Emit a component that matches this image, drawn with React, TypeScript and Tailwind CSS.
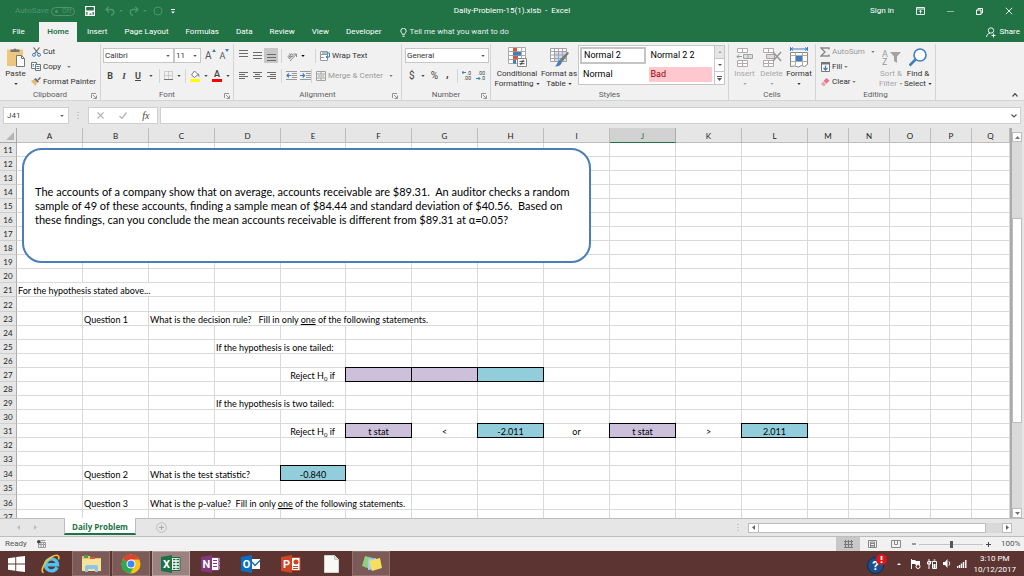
import type { ReactNode } from "react";

/* ---------- small shared pieces ---------- */

function Caret({ className = "text-[#777]" }: { className?: string }) {
  return (
    <svg viewBox="0 0 5 3" className={`h-0.5 w-1 shrink-0 ${className}`} aria-hidden="true">
      <path d="M0 0h5L2.500 3z" fill="currentColor" />
    </svg>
  );
}

function Svg({ w, h, className = "", children }: { w: number; h: number; className?: string; children: ReactNode }) {
  return (
    <svg width={w} height={h} viewBox={`0 0 ${w} ${h}`} className={`shrink-0 ${className}`} fill="none" aria-hidden="true">
      {children}
    </svg>
  );
}

function IconButton({ label, className = "", children }: { label: string; className?: string; children: ReactNode }) {
  return (
    <button type="button" aria-label={label} className={`flex shrink-0 items-center justify-center ${className}`}>
      {children}
    </button>
  );
}

function Group({ label, width, launcher, children }: { label: string; width: string; launcher?: boolean; children: ReactNode }) {
  return (
    <section aria-label={label} className={`flex shrink-0 flex-col border-r border-[#d4d4d4] ${width}`}>
      <div className="flex h-[46px]">{children}</div>
      <div className="relative flex h-2.5 items-center justify-center text-[#5f5f5f]">
        {label}
        {launcher && (
          <IconButton label={`${label} settings`} className="absolute right-[3px] top-[3px]">
            <Svg w={6} h={6}>
              <path d="M.5 5V.5H5M2 2l3 3M5.500 2.500v3h-3" stroke="#888" strokeWidth=".9" />
            </Svg>
          </IconButton>
        )}
      </div>
    </section>
  );
}

function Combo({ label, value, width }: { label: string; value: string; width: string }) {
  return (
    <div className={`relative flex h-[15px] shrink-0 items-center border border-[#c6c6c6] bg-white ${width}`}>
      <select aria-label={label} className="h-full w-full appearance-none bg-transparent pl-px text-[#333] outline-none">
        <option>{value}</option>
      </select>
      <Caret className="pointer-events-none absolute right-[3px] text-[#555]" />
    </div>
  );
}

const Rule = () => <span className="h-3.5 w-px shrink-0 bg-[#d4d4d4]" />;

function Lines({ rows, x = [0, 0, 0, 0], w = [9, 9, 9, 9] }: { rows: number[]; x?: number[]; w?: number[] }) {
  return (
    <Svg w={9} h={11}>
      {rows.map((y, i) => (
        <rect key={y} x={x[i]} y={y} width={w[i]} height="1" fill="#6b6b6b" />
      ))}
    </Svg>
  );
}

/* ---------- title bar and tabs ---------- */

function TitleBar() {
  return (
    <header className="grid h-[22px] grid-cols-[1fr_auto_1fr] items-center text-white">
      <div className="flex items-center pl-[15px] text-[#4f9470]">
        <span className="w-9">AutoSave</span>
        <button type="button" className="flex h-[9px] w-6 items-center gap-1 rounded-full border border-[#4f9470] pl-[3px] text-[7px] leading-none">
          <span className="size-[3px] rounded-full bg-[#4f9470]" />
          Off
        </button>
        <IconButton label="Save" className="ml-2.5">
          <Svg w={10} h={10}>
            <path d="M.6.6h8.800v8.800H.6z" stroke="#fff" strokeWidth="1.200" />
            <path d="M2 1h6v3.500H2z" fill="#217346" />
            <path d="M1 4.500h8V6H1zM2.500 6h5v3.500h-1V7.500h-2v2h-2z" fill="#fff" />
          </Svg>
        </IconButton>
        <IconButton label="Undo" className="ml-2.5">
          <Svg w={10} h={10}>
            <path d="M1 3.500h5a2.800 2.800 0 0 1 0 5.600M3.800.7 1 3.500l2.800 2.800" stroke="#4f9470" strokeWidth="1.300" />
          </Svg>
        </IconButton>
        <Caret className="ml-1 text-[#4f9470]" />
        <IconButton label="Redo" className="ml-1.5">
          <Svg w={10} h={10}>
            <path d="M9 3.500H4a2.800 2.800 0 0 0 0 5.600M6.200.7 9 3.500 6.200 6.300" stroke="#4f9470" strokeWidth="1.300" />
          </Svg>
        </IconButton>
        <Caret className="ml-1 text-[#4f9470]" />
        <IconButton label="Touch mode" className="ml-1.5">
          <Svg w={10} h={10}>
            <circle cx="5" cy="5" r="4" stroke="#4f9470" />
          </Svg>
        </IconButton>
        <IconButton label="Customize toolbar" className="ml-2">
          <Svg w={4} h={5}>
            <path d="M0 .5h4" stroke="#fff" />
            <path d="M0 2.500h4L2 4.500z" fill="#fff" />
          </Svg>
        </IconButton>
      </div>
      <h1>Daily-Problem-15(1).xlsb&nbsp; -&nbsp; Excel</h1>
      <div className="flex items-center justify-end gap-[22px] pr-[11px]">
        <a href="#signin">Sign in</a>
        <IconButton label="Ribbon display options">
          <Svg w={9} h={8}>
            <path d="M.5.5h8v7h-8zM.5 2h8M4.500 6.500V3.500M3 4.800l1.500-1.500L6 4.800" stroke="#fff" strokeWidth=".9" />
          </Svg>
        </IconButton>
        <IconButton label="Minimize">
          <Svg w={7} h={7}>
            <path d="M0 3.500h7" stroke="#8fb9a2" />
          </Svg>
        </IconButton>
        <IconButton label="Restore">
          <Svg w={7} h={7}>
            <path d="M.5 2h4.500v4.500H.5zM2 2V.5h4.500V5H5" stroke="#fff" />
          </Svg>
        </IconButton>
        <IconButton label="Close">
          <Svg w={8} h={8}>
            <path d="m.8.8 6.400 6.400M7.200.8.8 7.200" stroke="#fff" strokeWidth=".9" />
          </Svg>
        </IconButton>
      </div>
    </header>
  );
}

const TABS = ["Insert", "Page Layout", "Formulas", "Data", "Review", "View", "Developer"];

function RibbonTabs() {
  return (
    <nav className="flex h-5 items-stretch text-white">
      <button type="button" className="w-[39px] pr-0.5">File</button>
      <button type="button" className="w-[38px] bg-[#f1f1f1] font-semibold text-[#217346]">Home</button>
      <div className="flex gap-px pl-0.5">
        {TABS.map((t) => (
          <button key={t} type="button" className="px-2">{t}</button>
        ))}
      </div>
      <button type="button" className="flex items-center gap-[3px] pl-2.5 text-[#e4efe9]">
        <Svg w={7} h={9}>
          <path d="M2.300 6.300C2.300 5 .8 4.600.8 3a2.700 2.700 0 0 1 5.400 0c0 1.600-1.500 2-1.500 3.300zM2.300 8.200h2.400" stroke="#fff" strokeWidth=".9" />
        </Svg>
        Tell me what you want to do
      </button>
      <button type="button" className="ml-auto flex items-center gap-1 pr-1">
        <Svg w={10} h={11}>
          <circle cx="5" cy="3.500" r="2.700" stroke="#fff" strokeWidth=".9" />
          <path d="M.6 10c.2-2.300 1.500-3.600 3.400-3.800M7.500 6.500v4M5.500 8.500h4" stroke="#fff" strokeWidth=".9" />
        </Svg>
        Share
      </button>
    </nav>
  );
}

/* ---------- ribbon ---------- */

function SmallCommand({ icon, label, caret, dim, wide }: { icon: ReactNode; label: string; caret?: boolean; dim?: boolean; wide?: boolean }) {
  return (
    <button type="button" className={`flex h-[15px] items-center gap-0.5 whitespace-nowrap ${dim ? "text-[#9a9a9a]" : "text-[#333]"}`}>
      <span className="flex w-2.5 justify-center">{icon}</span>
      {label}
      {caret && <Caret className={wide ? "ml-1 text-[#777]" : "text-[#777]"} />}
    </button>
  );
}

function BigCommand({ icon, lines, width, dim, caretBelow }: { icon: ReactNode; lines: string[]; width: string; dim?: boolean; caretBelow?: boolean }) {
  const tone = dim ? "text-[#a6a6a6]" : "text-[#333]";
  return (
    <button type="button" className={`flex shrink-0 flex-col items-center whitespace-nowrap pt-px ${width} ${tone}`}>
      <span className="flex h-6 items-center">{icon}</span>
      {lines.map((l, i) => (
        <span key={l} className="flex h-2.5 items-center gap-0.5">
          {l}
          {!caretBelow && i === lines.length - 1 && <Caret className={tone} />}
        </span>
      ))}
      {caretBelow && (
        <span className="flex h-2.5 items-center">
          <Caret className={tone} />
        </span>
      )}
    </button>
  );
}

function Clipboard() {
  return (
    <Group label="Clipboard" width="w-[101px]" launcher>
      <BigCommand
        width="w-[31px]"
        caretBelow
        lines={["Paste"]}
        icon={
          <Svg w={18} h={20}>
            <path d="M0 2.500h16V19H0z" fill="#eec77f" />
            <path d="M3.500 5V2.500h3a1.600 1.600 0 0 1 3 0h3V5z" fill="#777" />
            <path d="M9.500 8.500h5l3 3v8h-8z" fill="#fff" stroke="#777" />
            <path d="M14.500 8.500v3h3" stroke="#777" />
          </Svg>
        }
      />
      <div className="flex flex-col">
        <SmallCommand
          label="Cut"
          icon={
            <Svg w={9} h={10}>
              <path d="m1.500.5 4.800 6M7.500.5l-4.800 6" stroke="#666" strokeWidth="1.200" />
              <circle cx="2" cy="7.800" r="1.500" stroke="#3f7fbf" />
              <circle cx="7" cy="7.800" r="1.500" stroke="#3f7fbf" />
            </Svg>
          }
        />
        <SmallCommand
          label="Copy"
          caret
          wide
          icon={
            <Svg w={10} h={9}>
              <path d="M.5.5h5v6h-5z" fill="#fff" stroke="#777" />
              <path d="M4.500 2.500h5v6h-5z" fill="#fff" stroke="#777" />
              <path d="M1.500 2.500H3M1.500 4H3M5.500 4.500h3M5.500 6.500h3" stroke="#3f7fbf" />
            </Svg>
          }
        />
        <SmallCommand
          label="Format Painter"
          icon={
            <Svg w={10} h={9}>
              <path d="m0 4 3-1.500 3 3L4.500 9z" fill="#eab96b" />
              <path d="m3 2.300 1.600-1.200 3.400 3.300-1.300 1.400zM6.500 2.300 9 0l1 1-2.300 2.500z" fill="#6d6d6d" />
            </Svg>
          }
        />
      </div>
    </Group>
  );
}

function FontGroup() {
  return (
    <Group label="Font" width="w-[133px]" launcher>
      <div className="flex w-full flex-col gap-[5px] pl-0.5 pt-1">
        <div className="flex items-center">
          <Combo label="Font family" value="Calibri" width="w-[71px]" />
          <Combo label="Font size" value="11" width="w-[27px]" />
          <IconButton label="Increase font size" className="ml-1 items-start text-[10px] leading-[13px] text-[#555]">
            A<Svg w={4} h={3}><path d="M2 0 4 3H0z" fill="#3f7fbf" /></Svg>
          </IconButton>
          <IconButton label="Decrease font size" className="ml-1 items-start text-[9px] leading-[14px] text-[#555]">
            A<Svg w={4} h={3}><path d="M2 3 4 0H0z" fill="#3f7fbf" /></Svg>
          </IconButton>
        </div>
        <div className="flex h-[15px] items-center text-[9px] text-[#444]">
          <button type="button" className="w-3.5 font-bold">B</button>
          <button type="button" className="w-3.5 font-['Liberation_Serif',serif] font-bold italic">I</button>
          <button type="button" className="w-3.5 font-semibold underline">U</button>
          <Caret className="ml-1" />
          <span className="ml-1.5 flex"><Rule /></span>
          <IconButton label="Borders" className="ml-1">
            <Svg w={9} h={9}>
              <path d="M.5.5h8v8h-8zM4.500.5v8M.5 4.500h8" stroke="#aaa" strokeDasharray="1 1" />
              <path d="M0 8.500h9" stroke="#777" />
            </Svg>
          </IconButton>
          <Caret className="ml-1" />
          <span className="ml-1 flex"><Rule /></span>
          <IconButton label="Fill color" className="ml-1">
            <Svg w={10} h={12}>
              <path d="m4.500 1 3.500 3.500-3.500 3L1.500 5z" fill="#fff" stroke="#777" />
              <path d="M8 3.500c1.200.5 1.600 1.800 1.200 4C8.600 6.500 8 6 8 3.500z" fill="#3f7fbf" />
              <path d="M0 9h10v3H0z" fill="#ff0" />
            </Svg>
          </IconButton>
          <Caret className="ml-1" />
          <IconButton label="Font color" className="ml-1 w-2.5 flex-col">
            <span className="text-[9px] font-semibold leading-[9px]">A</span>
            <span className="h-[3px] w-2.5 bg-[#f00]" />
          </IconButton>
          <Caret className="ml-1" />
        </div>
      </div>
    </Group>
  );
}

function Indent({ out }: { out?: boolean }) {
  return (
    <Svg w={11} h={9}>
      <path d="M0 .5h11M6 2.500h5M6 4.500h5M6 6.500h5M0 8.500h11" stroke="#999" />
      <path d={out ? "M5.500 4.500H1M2.800 2.500 1 4.500l1.800 2" : "M0 4.500h4.500M2.700 2.500l1.800 2-1.800 2"} stroke="#3f7fbf" strokeWidth="1.200" />
    </Svg>
  );
}

function Alignment() {
  return (
    <Group label="Alignment" width="w-[168px]" launcher>
      <div className="flex w-full flex-col gap-[5px] pl-0.5 pt-1">
        <div className="flex h-[15px] items-center">
          <IconButton label="Top align" className="h-[15px] w-3.5"><Lines rows={[0, 3, 6]} /></IconButton>
          <IconButton label="Middle align" className="h-[15px] w-3.5"><Lines rows={[2, 5, 8]} /></IconButton>
          <IconButton label="Bottom align" className="h-[15px] w-3.5 bg-[#c8c8c8]"><Lines rows={[4, 7, 10]} /></IconButton>
          <span className="ml-[3px] flex"><Rule /></span>
          <IconButton label="Orientation" className="ml-1">
            <Svg w={12} h={12}>
              <path d="M4 11 10.500 4M10.500 7V4h-3" stroke="#888" />
              <text x="1" y="8" fontSize="6" fill="#555" transform="rotate(-35 4 6)">ab</text>
            </Svg>
          </IconButton>
          <Caret className="ml-[3px]" />
          <span className="ml-2.5 mr-1 flex"><Rule /></span>
          <SmallCommand
            label="Wrap Text"
            icon={
              <Svg w={10} h={10}>
                <path d="M.5.5h7v9h-7z" fill="#fff" stroke="#999" />
                <path d="M0 3.500h8M0 6.500h4" stroke="#999" />
                <path d="M2 2h7.500v4H6M7.500 4.500 6 6l1.500 1.500" stroke="#3f7fbf" />
              </Svg>
            }
          />
        </div>
        <div className="flex h-[15px] items-center">
          <IconButton label="Align left" className="h-[15px] w-3.5"><Lines rows={[2, 4, 6, 8]} w={[9, 6, 9, 6]} /></IconButton>
          <IconButton label="Center" className="h-[15px] w-3.5"><Lines rows={[2, 4, 6, 8]} x={[0, 2, 0, 2]} w={[9, 5, 9, 5]} /></IconButton>
          <IconButton label="Align right" className="h-[15px] w-3.5"><Lines rows={[2, 4, 6, 8]} x={[0, 3, 0, 3]} w={[9, 6, 9, 6]} /></IconButton>
          <span className="ml-[3px] flex"><Rule /></span>
          <IconButton label="Decrease indent" className="ml-1"><Indent out /></IconButton>
          <IconButton label="Increase indent" className="ml-[3px]"><Indent /></IconButton>
          <span className="mr-1 flex"><Rule /></span>
          <SmallCommand
            label="Merge & Center"
            dim
            caret
            wide
            icon={
              <Svg w={10} h={10}>
                <path d="M.5.5h9v9h-9zM.5 3h9M.5 7h9M5 .5V3M5 7v2.500M2 5h6" stroke="#a3a3a3" />
              </Svg>
            }
          />
        </div>
      </div>
    </Group>
  );
}

function DecimalIcon({ less }: { less?: boolean }) {
  return (
    <Svg w={11} h={13}>
      <text x={less ? "2" : "5"} y="6" fontSize="5" fill="#333">{less ? ".00" : ".0"}</text>
      <text x={less ? "5" : "2"} y="11" fontSize="5" fill="#333">{less ? ".0" : ".00"}</text>
      <path d={less ? "M0 9.500h4M2.500 8 4 9.500 2.500 11" : "M4 3.500H0M1.500 2 0 3.500 1.500 5"} stroke="#3f7fbf" />
    </Svg>
  );
}

function NumberGroup() {
  return (
    <Group label="Number" width="w-[89px]" launcher>
      <div className="flex w-full flex-col gap-[5px] pl-[3px] pt-1">
        <Combo label="Number format" value="General" width="w-[84px]" />
        <div className="flex h-[15px] items-center text-[#444]">
          <button type="button" className="ml-1 text-[10px]">$</button>
          <Caret className="ml-1.5" />
          <button type="button" className="ml-1.5 text-[10px]">%</button>
          <button type="button" className="ml-2 pb-1 text-[11px] font-bold">,</button>
          <span className="ml-2 mr-1 flex"><Rule /></span>
          <IconButton label="Increase decimal"><DecimalIcon /></IconButton>
          <IconButton label="Decrease decimal" className="ml-[3px]"><DecimalIcon less /></IconButton>
        </div>
      </div>
    </Group>
  );
}

function Styles() {
  return (
    <Group label="Styles" width="w-[238px]">
      <BigCommand
        width="w-[52px]"
        lines={["Conditional", "Formatting"]}
        icon={
          <Svg w={19} h={20}>
            <path d="M.5.5h17v16H.5zM.5 4.500h17M.5 8.500h17M.5 12.500h17M5.500.5v16M13.500.5v16" fill="#fff" stroke="#aaa" />
            <path d="M5 1h4v3.500H5zM5 9h5v3.500H5z" fill="#d9573a" />
            <path d="M5 5h8v3.500H5zM5 13h3v3.500H5z" fill="#3f7fbf" />
            <path d="M9.500 11.500h9v8h-9z" fill="#fff" stroke="#888" />
            <path d="M11.500 14.300h5M11.500 16.700h5M15.500 12.800l-3 5.400" stroke="#444" />
          </Svg>
        }
      />
      <BigCommand
        width="w-[32px]"
        lines={["Format as", "Table"]}
        icon={
          <Svg w={19} h={20}>
            <path d="M.5 1.500h16v13H.5z" fill="#fff" />
            <path d="M5 5h11v9H5z" fill="#c9dcf0" />
            <path d="M.5 1.500h16v13H.5zM.5 4.500h16M.5 8h16M.5 11.500h16M4.500 1.500v13M8.500 1.500v13M12.500 1.500v13" stroke="#a3a3a3" />
            <path d="m17.500 5 1.500 1-7 9-2.500-2z" fill="#777" />
            <path d="m9.500 13 2.500 2c-.8 3-3 4.500-7 4.500C7 18 7.500 14.500 9.500 13z" fill="#3f7fbf" />
          </Svg>
        }
      />
      <div className="ml-[3px] mt-px flex h-10 w-[147px] border border-[#c6c6c6] bg-white text-[9px] text-black">
        <div className="grid flex-1 grid-cols-2 grid-rows-2 text-left">
          <button type="button" className="m-px border-2 border-[#c4c4c4] pl-0.5 text-left leading-none">Normal 2</button>
          <button type="button" className="m-0.5 pl-0.5 text-left leading-none">Normal 2 2</button>
          <button type="button" className="m-0.5 pl-0.5 text-left leading-none">Normal</button>
          <button type="button" className="m-0.5 bg-[#ffc7ce] pl-0.5 text-left leading-none text-[#9c0006]">Bad</button>
        </div>
        <div className="flex w-2.5 flex-col divide-y divide-[#c6c6c6] border-l border-[#c6c6c6]">
          <IconButton label="Previous styles" className="flex-1 bg-[#e6e6e6]">
            <Svg w={4} h={2}><path d="M0 2h4L2 0z" fill="#aaa" /></Svg>
          </IconButton>
          <IconButton label="Next styles" className="flex-1"><Svg w={4} h={2}><path d="M0 0h4L2 2z" fill="#555" /></Svg></IconButton>
          <IconButton label="More styles" className="flex-1">
            <Svg w={5} h={5}><path d="M0 .5h5" stroke="#555" /><path d="M0 2h5L2.500 5z" fill="#555" /></Svg>
          </IconButton>
        </div>
      </div>
    </Group>
  );
}

function Cells() {
  return (
    <Group label="Cells" width="w-[87px]">
      <span className="w-0.5" />
      <BigCommand
        width="w-[27px]"
        dim
        caretBelow
        lines={["Insert"]}
        icon={
          <Svg w={18} h={19}>
            <path d="M1.500.5h10v4h-10zM6.500.5v4M1.500 12.500h10v6h-10zM6.500 12.500v6M1.500 15.500h10" fill="#fff" stroke="#b3a9ae" />
            <path d="M7.500 6.500h9v4h-9zM12 6.500v4" fill="#ddd" stroke="#a3a3a3" />
            <path d="M6 8.500H1M3 6.500l-2 2 2 2" stroke="#999" />
          </Svg>
        }
      />
      <BigCommand
        width="w-[27px]"
        dim
        caretBelow
        lines={["Delete"]}
        icon={
          <Svg w={20} h={19}>
            <path d="M1.500.5h10v4h-10zM6.500.5v4M1.500 12.500h10v6h-10zM6.500 12.500v6M1.500 15.500h10" fill="#fff" stroke="#b3a9ae" />
            <path d="M4.500 6.500h8v4h-8z" fill="#ddd" stroke="#a3a3a3" />
            <path d="m11 4 8 9M19 4l-8 9" stroke="#999" strokeWidth="1.600" />
          </Svg>
        }
      />
      <BigCommand
        width="w-[28px]"
        caretBelow
        lines={["Format"]}
        icon={
          <Svg w={19} h={21}>
            <path d="M1 2h16M3 .5 1 2l2 1.500M15 .5 17 2l-2 1.500M.5 0v4M17.500 0v4" stroke="#3f7fbf" />
            <path d="M.5 5.500h17v12l-3 2-3-1-3 1.500-4-1-4 .5z" fill="#fff" stroke="#888" />
            <path d="M.5 8.500h17M.5 14.500h17M5.500 5.500v13M12.500 5.500v13" stroke="#aaa" />
            <path d="M6 9h6v5H6z" fill="#3f7fbf" />
          </Svg>
        }
      />
    </Group>
  );
}

function Editing() {
  return (
    <Group label="Editing" width="w-[120px]">
      <div className="flex w-[62px] flex-col pl-1">
        <SmallCommand
          label="AutoSum"
          dim
          caret
          wide
          icon={<Svg w={10} h={10}><path d="M9 2.500V1H1l4 4-4 4h8V7.500" stroke="#8a8a8a" strokeWidth="1.400" /></Svg>}
        />
        <SmallCommand
          label="Fill"
          caret
          icon={
            <Svg w={9} h={10}>
              <path d="M.5.5h8v9h-8z" fill="#fff" stroke="#777" />
              <path d="M0 0h9v2.500H0z" fill="#777" />
              <path d="M4.500 3.500v4.500M2.500 6l2 2 2-2" stroke="#3f7fbf" strokeWidth="1.300" />
            </Svg>
          }
        />
        <SmallCommand
          label="Clear"
          caret
          icon={
            <Svg w={9} h={8}>
              <path d="m5.500 0 3 2.500-3 3.300-3-2.700z" fill="#e8728a" />
              <path d="m2 3.600 3 2.700L3.500 8H2L0 6z" fill="#f0a0b0" />
            </Svg>
          }
        />
      </div>
      <BigCommand
        width="w-[26px]"
        dim
        lines={["Sort &", "Filter"]}
        icon={
          <Svg w={19} h={21}>
            <text x="0" y="10" fontSize="9" fill="#999">A</text>
            <text x="0" y="18" fontSize="9" fill="#999">Z</text>
            <path d="M8 5h11l-4 4.500V16l-3-2V9.500z" fill="#a3a3a3" />
          </Svg>
        }
      />
      <BigCommand
        width="w-[28px]"
        lines={["Find &", "Select"]}
        icon={
          <Svg w={18} h={19}>
            <circle cx="11" cy="7" r="6" fill="#fff" stroke="#3f7fbf" strokeWidth="1.600" />
            <path d="m6.500 11.500-6 6" stroke="#3f7fbf" strokeWidth="2.600" />
          </Svg>
        }
      />
    </Group>
  );
}

function Ribbon() {
  return (
    <div className="flex h-[59px] border-b border-[#d4d4d4] bg-[#f1f1f1] pt-0.5">
      <Clipboard />
      <FontGroup />
      <Alignment />
      <NumberGroup />
      <Styles />
      <Cells />
      <Editing />
      <IconButton label="Collapse ribbon" className="ml-auto mr-1.5 self-end pb-[3px]">
        <Svg w={6} h={4}><path d="m.5 3.500 2.500-3 2.500 3" stroke="#555" strokeWidth="1.200" /></Svg>
      </IconButton>
    </div>
  );
}

function FormulaBar() {
  return (
    <div className="flex h-[27px] items-center bg-[#e6e6e6] px-[3px] pt-0.5 text-[#444]">
      <div className="relative flex h-[17px] w-[66px] items-center border border-[#cfcfcf] bg-white">
        <input aria-label="Name box" defaultValue="J41" className="w-full bg-transparent pl-[3px] text-[8px] outline-none" />
        <Caret className="pointer-events-none absolute right-1 text-[#555]" />
      </div>
      <Svg w={2} h={8} className="mx-2">
        <path d="M1 0v8" stroke="#aaa" strokeDasharray="1 2" />
      </Svg>
      <div className="ml-px flex h-[17px] w-[70px] items-center justify-around border border-[#cfcfcf] bg-white">
        <IconButton label="Cancel"><Svg w={7} h={7}><path d="m.5.5 6 6M6.500.5l-6 6" stroke="#b5b5b5" strokeWidth="1.200" /></Svg></IconButton>
        <IconButton label="Enter"><Svg w={8} h={7}><path d="m.5 4 2.500 2.500L7.500.5" stroke="#b5b5b5" strokeWidth="1.300" /></Svg></IconButton>
        <button type="button" className="font-['Liberation_Serif',serif] text-[10px] italic">fx</button>
      </div>
      <div className="ml-0.5 flex h-[17px] flex-1 items-center border border-[#cfcfcf] bg-white pr-[3px]">
        <input aria-label="Formula" className="min-w-0 flex-1 bg-transparent px-1 outline-none" />
        <Svg w={6} h={4}><path d="m.5.5 2.500 2.500L5.500.5" stroke="#555" strokeWidth="1.200" /></Svg>
      </div>
    </div>
  );
}

/* ---------- worksheet ---------- */

const COLUMNS = "ABCDEFGHIJKLMNOPQ".split("");
const ROWS = Array.from({ length: 27 }, (_, i) => i + 11);
const TALL_ROWS = [22, 34, 36];

function columnWidth(index: number) {
  if (index === 4) return "w-[65px]";
  if (index < 12) return "w-[66px]";
  return index < 16 ? "w-[41px]" : "";
}

type Cell = { text?: ReactNode; span?: number; align?: "center" | "right"; fill?: "purple" | "teal" };

const reject: Cell = { text: <>Reject H<sub className="bottom-[-2px] text-[6px]">0</sub> if</>, align: "right" };

const CELLS: Record<string, Cell> = {
  A21: { text: "For the hypothesis stated above...", span: 3 },
  B23: { text: "Question 1" },
  C23: { text: <>What is the decision rule?&nbsp;&nbsp; Fill in only <u>one</u> of the following statements.</>, span: 5 },
  D25: { text: "If the hypothesis is one tailed:", span: 2 },
  E27: reject,
  F27: { fill: "purple" },
  G27: { fill: "purple" },
  H27: { fill: "teal" },
  D29: { text: "If the hypothesis is two tailed:", span: 2 },
  E31: reject,
  F31: { text: "t stat", fill: "purple" },
  G31: { text: "<", align: "center" },
  H31: { text: "-2.011", fill: "teal" },
  I31: { text: "or", align: "center" },
  J31: { text: "t stat", fill: "purple" },
  K31: { text: ">", align: "center" },
  L31: { text: "2.011", fill: "teal" },
  B34: { text: "Question 2" },
  C34: { text: "What is the test statistic?", span: 2 },
  E34: { text: "-0.840", fill: "teal" },
  B36: { text: "Question 3" },
  C36: { text: <>What is the p-value?&nbsp; Fill in only <u>one</u> of the following statements.</>, span: 4 },
};

const BOXED = "text-center border-black shadow-[-1px_0_0_#000,0_-1px_0_#000,-1px_-1px_0_#000]";

function cellClass(cell?: Cell) {
  if (cell?.fill === "purple") return `${BOXED} bg-[#ccc0da]`;
  if (cell?.fill === "teal") return `${BOXED} bg-[#92cddc]`;
  if (cell?.align === "center") return "border-[#d9d9d9] text-center";
  if (cell?.align === "right") return "border-[#d9d9d9] pr-2.5 text-right";
  return "border-[#d9d9d9] pl-px";
}

function Row({ row }: { row: number }) {
  const cells: ReactNode[] = [];
  for (let i = 0; i < COLUMNS.length; ) {
    const id = `${COLUMNS[i]}${row}`;
    const cell = CELLS[id];
    const span = cell?.span ?? 1;
    cells.push(
      <td key={id} colSpan={span} className={`whitespace-nowrap border-b border-r p-0 align-bottom ${cellClass(cell)}`}>
        {cell?.text}
      </td>,
    );
    i += span;
  }
  return (
    <tr className={TALL_ROWS.includes(row) ? "h-[15px]" : "h-[14px]"}>
      <th
        scope="row"
        className="border-b border-r border-b-[#cfcfcf] border-r-[#ababab] bg-[#e6e6e6] p-0 align-bottom text-[8px] font-normal text-[#222]"
      >
        {row}
      </th>
      {cells}
    </tr>
  );
}

function Sheet() {
  return (
    <div className="flex min-h-0 flex-1 bg-[#e6e6e6]">
      <main className="relative min-w-0 flex-1 overflow-hidden border-r-2 border-[#ababab] bg-white font-['Lato','Liberation_Sans',sans-serif] text-[9px] leading-[11px] text-black">
        <table className="w-full table-fixed border-separate border-spacing-0">
          <colgroup>
            <col className="w-[17px]" />
            {COLUMNS.map((c, i) => (
              <col key={c} className={columnWidth(i)} />
            ))}
          </colgroup>
          <thead>
            <tr className="h-[15px] bg-[#e6e6e6] align-bottom text-[8px] text-[#222]">
              <td className="border-b border-r border-[#ababab] p-0">
                <Svg w={8} h={8} className="mb-0.5 ml-auto mr-0.5"><path d="M8 0v8H0z" fill="#b5b5b5" /></Svg>
              </td>
              {COLUMNS.map((c) => (
                <th
                  key={c}
                  scope="col"
                  className={
                    c === "J"
                      ? "border-b border-r border-b-[#217346] border-r-[#ababab] bg-[#d2d2d2] p-0 font-normal text-[#217346]"
                      : "border-b border-r border-[#bdbdbd] p-0 font-normal"
                  }
                >
                  {c}
                </th>
              ))}
            </tr>
          </thead>
          <tbody>
            {ROWS.map((r) => (
              <Row key={r} row={r} />
            ))}
          </tbody>
        </table>
        <div className="absolute left-[22px] top-5 flex h-[115px] w-[569px] items-center rounded-[20px] border-2 border-[#4a7ebb] bg-white px-[11px]">
          <p className="whitespace-nowrap text-[11px] leading-[14px]">
            The accounts of a company show that on average, accounts receivable are $89.31.&nbsp; An auditor checks a random
            <br />
            sample of 49 of these accounts, finding a sample mean of $84.44 and standard deviation of $40.56.&nbsp; Based on
            <br />
            these findings, can you conclude the mean accounts receivable is different from $89.31 at α=0.05?
          </p>
        </div>
      </main>
      <div className="flex w-3 flex-col pr-0.5 pt-1">
        <IconButton label="Scroll up" className="h-2.5 border border-[#bdbdbd] bg-white">
          <Svg w={5} h={3}><path d="M0 3h5L2.500 0z" fill="#777" /></Svg>
        </IconButton>
        <div className="flex flex-1 flex-col bg-[#d9d9d9]">
          <span className="grow-[77]" />
          <span className="grow-[204] border border-[#bdbdbd] bg-white" />
          <span className="grow-[86]" />
        </div>
        <IconButton label="Scroll down" className="h-2.5 border border-[#bdbdbd] bg-white">
          <Svg w={5} h={3}><path d="M0 0h5L2.500 3z" fill="#777" /></Svg>
        </IconButton>
      </div>
    </div>
  );
}

function SheetTabs() {
  return (
    <div className="flex h-[19px] items-stretch border-b border-t border-[#bdbdbd] bg-[#e6e6e6]">
      <div className="flex w-16 items-center gap-3.5 pl-[17px]">
        <IconButton label="Previous sheet"><Svg w={3} h={5}><path d="M3 0v5L0 2.500z" fill="#bbb" /></Svg></IconButton>
        <IconButton label="Next sheet"><Svg w={3} h={5}><path d="M0 0v5l3-2.500z" fill="#bbb" /></Svg></IconButton>
      </div>
      <button
        type="button"
        className="-mt-px mb-px w-[72px] border-x border-b-2 border-x-[#bdbdbd] border-b-[#217346] bg-white pt-0.5 font-['Open_Sans',sans-serif] font-bold text-[#217346]"
      >
        Daily Problem
      </button>
      <IconButton label="New sheet" className="ml-5">
        <Svg w={11} h={11}>
          <circle cx="5.500" cy="5.500" r="4.800" stroke="#bdbdbd" />
          <path d="M5.500 3v5M3 5.500h5" stroke="#aaa" />
        </Svg>
      </IconButton>
      <div className="ml-auto flex items-center">
        <Svg w={2} h={8} className="mr-[9px]"><path d="M1 0v8" stroke="#aaa" strokeDasharray="1 2" /></Svg>
        <IconButton label="Scroll left" className="h-2.5 w-[11px] border border-[#bdbdbd] bg-white">
          <Svg w={3} h={5}><path d="M3 0v5L0 2.500z" fill="#666" /></Svg>
        </IconButton>
        <div className="h-2.5 w-[227px] border border-l-0 border-[#bdbdbd] bg-white" />
        <div className="h-2.5 w-4 bg-[#d9d9d9]" />
        <IconButton label="Scroll right" className="mr-3 h-2.5 w-2.5 border border-[#bdbdbd] bg-white">
          <Svg w={3} h={5}><path d="M0 0v5l3-2.500z" fill="#666" /></Svg>
        </IconButton>
      </div>
    </div>
  );
}

function StatusBar() {
  return (
    <div className="flex h-3.5 items-center bg-[#f1f1f1] pl-[5px] pr-1 text-[#555]">
      <span className="w-8">Ready</span>
      <IconButton label="Record macro">
        <Svg w={9} h={8}>
          <path d="M1.500 2.500h7v5h-7zM1.500 4.500h7M4 2.500v5M6.500 2.500v5M3.500.5h5" stroke="#999" />
          <circle cx="1.800" cy="1.800" r="1.800" fill="#444" />
        </Svg>
      </IconButton>
      <div className="ml-auto flex h-full items-center">
        <IconButton label="Normal view" className="h-full w-6 bg-[#c8c8c8]">
          <Svg w={9} h={8}><path d="M1.500 0v8M4.500 0v8M7.500 0v8M0 1.500h9M0 4.500h9M0 7.500h9" stroke="#777" /></Svg>
        </IconButton>
        <IconButton label="Page layout view" className="h-full w-6">
          <Svg w={9} h={8}><path d="M.5.5h8v7h-8zM2.500 2h4v5h-4zM3 3.500h3M3 5.500h3" stroke="#888" /></Svg>
        </IconButton>
        <IconButton label="Page break view" className="h-full w-6">
          <Svg w={10} h={8}><path d="M.5.5h9v7h-9zM3.500.5v4h3v-4" stroke="#888" /></Svg>
        </IconButton>
        <IconButton label="Zoom out" className="ml-1 w-1"><Svg w={4} h={4}><path d="M0 2h4" stroke="#444" /></Svg></IconButton>
        <input
          type="range"
          aria-label="Zoom"
          defaultValue={50}
          className="mx-[3px] h-2 w-16 appearance-none bg-[linear-gradient(#c4c4c4,#c4c4c4)] bg-[length:100%_1px] bg-center bg-no-repeat [&::-webkit-slider-thumb]:h-[7px] [&::-webkit-slider-thumb]:w-[3px] [&::-webkit-slider-thumb]:appearance-none [&::-webkit-slider-thumb]:bg-[#555]"
        />
        <IconButton label="Zoom in"><Svg w={5} h={5}><path d="M0 2.500h5M2.500 0v5" stroke="#444" /></Svg></IconButton>
        <span className="ml-2.5 w-[19px] text-right">100%</span>
      </div>
    </div>
  );
}

/* ---------- taskbar ---------- */

function OfficeIcon({ letter, color, children }: { letter: string; color: string; children: ReactNode }) {
  return (
    <Svg w={20} h={20}>
      {children}
      <path d="M0 3 11 1v18L0 17z" fill={color} />
      <text x="5.500" y="14" textAnchor="middle" fontSize="11" fontWeight="700" fill="#fff">{letter}</text>
    </Svg>
  );
}

function TaskButton({ label, state = "idle", children }: { label: string; state?: "idle" | "open" | "active"; children: ReactNode }) {
  const look = {
    idle: "border-transparent",
    open: "border-[#93716e] bg-[#7b5a57]",
    active: "border-[#b9a3a1] bg-[#9b8280]",
  }[state];
  return (
    <IconButton label={label} className={`h-full w-[38px] border ${look}`}>
      {children}
    </IconButton>
  );
}

function Taskbar() {
  return (
    <footer className="flex h-[25px] items-stretch bg-[#5c3431] text-white">
      <IconButton label="Start" className="w-8">
        <Svg w={17} h={16}>
          <path d="M0 2.300 7.300 1.200v6.300H0zM8.200 1 17 0v7.500H8.200zM0 8.400h7.300v6.400L0 13.800zM8.200 8.400H17V16l-8.800-1z" fill="#fff" />
        </Svg>
      </IconButton>
      <div className="flex gap-0.5">
        <TaskButton label="Internet Explorer">
          <Svg w={20} h={20}>
            <path d="M16 13.300A6 6 0 1 1 16.500 10.800H6" stroke="#4fc1f0" strokeWidth="3.400" />
            <path d="M2.500 18.800C-1 17 3.500 7 11 2.800c4.500-2.500 8-2 6.500 2.700" stroke="#f5c230" strokeWidth="1.600" />
          </Svg>
        </TaskButton>
        <TaskButton label="File Explorer" state="open">
          <Svg w={22} h={19}>
            <path d="M2 2h8l1 2h10v13H2z" fill="#e9c766" />
            <path d="M4 1h4v3H4z" fill="#4a9b4a" />
            <path d="M10 3h5v2h-5z" fill="#d9573a" />
            <path d="M2 5h19v12H2z" fill="#f7e29a" />
            <path d="M5 18v-5q0-2 2-2h9q2 0 2 2v5h-3v-3H8v3z" fill="#8dc4e8" />
          </Svg>
        </TaskButton>
        <TaskButton label="Chrome" state="open">
          <Svg w={20} h={20}>
            <circle cx="10" cy="10" r="9.500" fill="#fbc116" />
            <path d="M10 10 1.800 5.200A9.500 9.500 0 0 1 18.300 5.500H10z" fill="#e0412f" />
            <path d="M1.800 5.200A9.500 9.500 0 0 0 9.200 19.500l4-7.300L10 10z" fill="#2da94f" />
            <circle cx="10" cy="10" r="4.500" fill="#fff" />
            <circle cx="10" cy="10" r="3.500" fill="#4285f4" />
          </Svg>
        </TaskButton>
        <TaskButton label="Excel" state="active">
          <OfficeIcon letter="X" color="#1d7044">
            <path d="M9 3.500h10v13H9z" fill="#fff" stroke="#1d7044" />
            <path d="M12 5.500h2.500M12 8.500h2.500M12 11.500h2.500M12 14.500h2.500M15.500 5.500H18M15.500 8.500H18M15.500 11.500H18M15.500 14.500H18" stroke="#1d7044" strokeWidth="1.500" />
          </OfficeIcon>
        </TaskButton>
        <TaskButton label="OneNote">
          <OfficeIcon letter="N" color="#80397b">
            <path d="M9 3.500h9v13H9z" fill="#fff" stroke="#80397b" />
            <path d="M12 6.500h4M12 9.500h4M12 12.500h4" stroke="#80397b" />
            <path d="M17 4h2v3h-2zM17 8h2v3h-2zM17 12h2v3h-2z" fill="#b97fb5" />
          </OfficeIcon>
        </TaskButton>
        <TaskButton label="Outlook">
          <OfficeIcon letter="O" color="#0a6fc2">
            <path d="M9 5h10v10H9z" fill="#fff" />
            <path d="m11 8 3 3.500 5-5" stroke="#0a6fc2" strokeWidth="1.300" />
          </OfficeIcon>
        </TaskButton>
        <TaskButton label="PowerPoint">
          <OfficeIcon letter="P" color="#d04525">
            <path d="M9 3.500h10v13H9z" fill="#fff" stroke="#d04525" />
            <circle cx="15" cy="8" r="2.500" fill="#d04525" />
            <path d="M12 12.500h5M12 14.500h5" stroke="#d04525" />
          </OfficeIcon>
        </TaskButton>
        <TaskButton label="Document">
          <Svg w={15} h={18}>
            <path d="M.5.5h10l4 4v13H.5z" fill="#f8f8f5" stroke="#d5d5cf" />
            <path d="M10.500.5v4h4" fill="#ddd" stroke="#c5c5bf" />
          </Svg>
        </TaskButton>
        <TaskButton label="Sticky Notes" state="open">
          <Svg w={21} h={17}>
            <path d="m4 1 8 2-3 11-8-3z" fill="#8fcf7f" />
            <path d="m7 4 8-1 1 11-9 1z" fill="#a6cdf0" />
            <path d="m8 6 11-3 2 10-10 3z" fill="#f7df5e" />
          </Svg>
        </TaskButton>
      </div>
      <div className="ml-auto flex items-center pr-2">
        <IconButton label="Support alert" className="mr-2.5">
          <Svg w={20} h={20}>
            <circle cx="8.500" cy="11.500" r="8" fill="#1c4f8c" stroke="#0c2c55" />
            <text x="8.500" y="16" textAnchor="middle" fontSize="13" fontWeight="700" fill="#fff">?</text>
            <circle cx="14.500" cy="5.500" r="5.500" fill="#d8161b" />
            <path d="M14.500 2v4M14.500 7.200v1.800" stroke="#fff" strokeWidth="1.800" />
          </Svg>
        </IconButton>
        <div className="flex items-center gap-1.5">
          <IconButton label="Show hidden icons" className="mr-1"><Svg w={4} h={2}><path d="M0 2h4L2 0z" fill="#fff" /></Svg></IconButton>
          <IconButton label="Action center">
            <Svg w={10} h={10}>
              <path d="M.5 0v10" stroke="#fff" />
              <path d="M1 1h3l1 1h4v4H5L4 5H1z" fill="#fff" />
              <circle cx="7" cy="7.500" r="2" fill="#5c3431" stroke="#fff" />
            </Svg>
          </IconButton>
          <IconButton label="Battery">
            <Svg w={10} h={10}>
              <path d="M5.500 2.500h4v7h-4zM6.500 1h2M.5 2.500h4M2 0v5M2 5v5M.5 3v2h3V3" stroke="#fff" />
              <path d="M6.500 5h2v4h-2z" fill="#fff" />
            </Svg>
          </IconButton>
          <IconButton label="Volume">
            <Svg w={8} h={9}>
              <path d="M0 3h2l2.500-3v9L2 6H0z" fill="#fff" />
              <path d="M6 2.500q1.200 2 0 4" stroke="#fff" />
            </Svg>
          </IconButton>
          <IconButton label="Network">
            <Svg w={10} h={8}>
              <path d="M.5 6v2M2.500 5v3M4.500 3.500V8M6.500 2v6M8.800 0v8" stroke="#fff" strokeWidth="1.400" />
            </Svg>
          </IconButton>
        </div>
        <div className="ml-1.5 text-center leading-[11px]">
          <div>3:10 PM</div>
          <div>10/12/2017</div>
        </div>
      </div>
    </footer>
  );
}

export default function App() {
  return (
    <div className="flex h-screen flex-col overflow-hidden bg-[#e6e6e6] font-['Roboto','Noto_Sans',sans-serif] text-[8px] leading-[10px]">
      <div className="bg-[#217346]">
        <TitleBar />
        <RibbonTabs />
      </div>
      <Ribbon />
      <FormulaBar />
      <Sheet />
      <SheetTabs />
      <StatusBar />
      <Taskbar />
    </div>
  );
}
